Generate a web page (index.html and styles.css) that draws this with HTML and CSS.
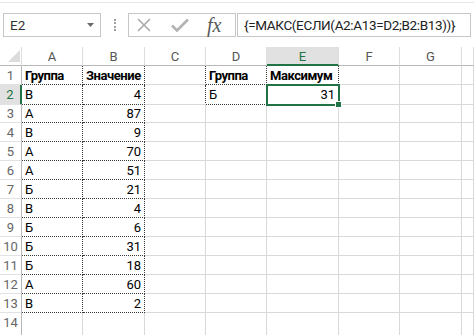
FILE: index.html
```html
<!DOCTYPE html>
<html>
<head>
  <link rel="stylesheet" href="styles.css">
</head>
<body>
  <div class="topline"></div>

  <div class="formula-bar">
	<div class="namebox">
	  <span>E2</span>
	  <svg class="drop" width="7" height="4" viewBox="0 0 7 4"><path d="M0 0h7L3.5 4z" fill="#6a6a6a"/></svg>
	</div>
	<div class="grip"></div>
	<div class="buttons">
	  <svg width="14" height="14" viewBox="0 0 14 14"><path d="M1 1L13 13M13 1L1 13" stroke="#a9a9a9" stroke-width="1.6" fill="none"/></svg>
	  <svg width="18" height="14" viewBox="0 0 18 14"><path d="M1 7.5L6 12.5L17 1.5" stroke="#b3b3b3" stroke-width="2.6" fill="none"/></svg>
	  <span class="fx">fx</span>
	</div>
	<div class="formula">{=МАКС(ЕСЛИ(A2:A13=D2;B2:B13))}</div>
  </div>

  <div class="sheet">
	<div class="row hdr">
	  <div class="corner"><svg width="12" height="12" viewBox="0 0 12 12"><path d="M12 0V12H0z" fill="#dcdcdc"/></svg></div>
	  <div>A</div><div>B</div><div>C</div><div>D</div><div class="on">E</div><div>F</div><div>G</div><div></div>
	</div>
	<div class="row">
	  <div class="rh">1</div>
	  <div class="dot b">Группа</div><div class="dot b">Значение</div><div class="dl"></div>
	  <div class="dot b">Группа</div><div class="dot b">Максимум</div><div></div><div></div><div></div>
	</div>
	<div class="row">
	  <div class="rh on">2</div>
	  <div class="dot">В</div><div class="dot n">4</div><div class="dl"></div>
	  <div class="dot">Б</div><div class="dot n sel">31</div><div></div><div></div><div></div>
	</div>
	<div class="row">
	  <div class="rh">3</div>
	  <div class="dot">А</div><div class="dot n">87</div><div></div><div></div><div></div><div></div><div></div><div></div>
	</div>
	<div class="row">
	  <div class="rh">4</div>
	  <div class="dot">В</div><div class="dot n">9</div><div></div><div></div><div></div><div></div><div></div><div></div>
	</div>
	<div class="row">
	  <div class="rh">5</div>
	  <div class="dot">А</div><div class="dot n">70</div><div></div><div></div><div></div><div></div><div></div><div></div>
	</div>
	<div class="row">
	  <div class="rh">6</div>
	  <div class="dot">А</div><div class="dot n">51</div><div></div><div></div><div></div><div></div><div></div><div></div>
	</div>
	<div class="row">
	  <div class="rh">7</div>
	  <div class="dot">Б</div><div class="dot n">21</div><div></div><div></div><div></div><div></div><div></div><div></div>
	</div>
	<div class="row">
	  <div class="rh">8</div>
	  <div class="dot">В</div><div class="dot n">4</div><div></div><div></div><div></div><div></div><div></div><div></div>
	</div>
	<div class="row">
	  <div class="rh">9</div>
	  <div class="dot">Б</div><div class="dot n">6</div><div></div><div></div><div></div><div></div><div></div><div></div>
	</div>
	<div class="row">
	  <div class="rh">10</div>
	  <div class="dot">Б</div><div class="dot n">31</div><div></div><div></div><div></div><div></div><div></div><div></div>
	</div>
	<div class="row">
	  <div class="rh">11</div>
	  <div class="dot">Б</div><div class="dot n">18</div><div></div><div></div><div></div><div></div><div></div><div></div>
	</div>
	<div class="row">
	  <div class="rh">12</div>
	  <div class="dot">А</div><div class="dot n">60</div><div></div><div></div><div></div><div></div><div></div><div></div>
	</div>
	<div class="row">
	  <div class="rh">13</div>
	  <div class="dot">В</div><div class="dot n">2</div><div></div><div></div><div></div><div></div><div></div><div></div>
	</div>
	<div class="row last">
	  <div class="rh">14</div>
	  <div></div><div></div><div></div><div></div><div></div><div></div><div></div><div></div>
	</div>
  </div>
</body>
</html>
```

FILE: styles.css
```css
:root {
  --grid: #d9d9d9;
  --hdr-line: #b8b8b8;
  --green: #217346;
  --dots: #3a3a3a;
}

body, html {
  margin: 0;
  padding: 0;
  height: 100%;
  overflow: hidden;
  background: #fff;
  font-family: Roboto, "Liberation Sans", sans-serif;
  color: #000;
}

.topline {
  height: 2px;
  border-bottom: 1px solid #e6e6e6;
}

.formula-bar {
  display: flex;
  align-items: center;
  height: 24px;
  margin: 10px 0 10px 3px;
}

.namebox {
  width: 98px;
  height: 24px;
  box-sizing: border-box;
  border: 1px solid #c6c6c6;
  display: flex;
  align-items: center;
  justify-content: space-between;
  padding: 0 6px 0 6px;
  font-size: 13.5px;
  color: #333;
}

.grip {
  height: 12px;
  margin: 0 12px 0 13px;
  border-left: 2px dotted #a0a0a0;
}

.buttons {
  width: 108px;
  height: 24px;
  box-sizing: border-box;
  border: 1px solid #c6c6c6;
  display: flex;
  align-items: center;
  padding-left: 8px;
  gap: 20px;
}

.fx {
  font-family: "Liberation Serif", serif;
  font-style: italic;
  font-size: 20px;
  color: #595959;
  margin-left: -2px;
}

.formula {
  flex: 1;
  height: 24px;
  box-sizing: border-box;
  margin: 0 3px 0 1px;
  border: 1px solid #c6c6c6;
  padding-left: 6px;
  font-size: 13.5px;
  letter-spacing: -0.35px;
  line-height: 22px;
  color: #222;
  white-space: nowrap;
  overflow: hidden;
}

.row {
  display: grid;
  grid-template-columns: 22px 61px 62px 61px 61px 72px 61px 62px 1fr;
  height: 19px;
}

.row.last {
  height: 22px;
}

.row > div {
  box-sizing: border-box;
  border-right: 1px solid var(--grid);
  border-bottom: 1px solid var(--grid);
  padding: 0 3px;
  font-size: 13px;
  line-height: 19px;
  white-space: nowrap;
  overflow: hidden;
}

.row.last > div {
  border-bottom: 0;
}

.hdr > div {
  text-align: center;
  color: #555;
  border-bottom-color: var(--hdr-line);
  border-right-color: #dedede;
}

.hdr .corner {
  display: flex;
  align-items: flex-end;
  justify-content: flex-end;
  padding: 0 1px 3px 0;
}

.hdr .on {
  background: #e1e1e1;
  color: var(--green);
  border-bottom: 2px solid var(--green);
}

.row > .rh {
  color: #666;
  text-align: center;
  padding: 0;
  border-right-color: var(--hdr-line);
  border-bottom-color: #e2e2e2;
}

.row > .rh.on {
  background: #e1e1e1;
  color: var(--green);
  border-right: 2px solid var(--green);
}

.row > .dot {
  border-right: 1px dotted var(--dots);
  border-bottom: 1px dotted var(--dots);
}

.row > .dl {
  border-right: 1px dotted var(--dots);
}

.b {
  font-weight: bold;
  letter-spacing: -0.45px;
}

.n {
  text-align: right;
}

.row > .sel {
  position: relative;
  overflow: visible;
  outline: 2px solid var(--green);
  outline-offset: -1px;
}

.sel::after {
  content: "";
  position: absolute;
  right: -4px;
  bottom: -4px;
  width: 5px;
  height: 5px;
  background: var(--green);
  border: 1px solid #fff;
}
```
